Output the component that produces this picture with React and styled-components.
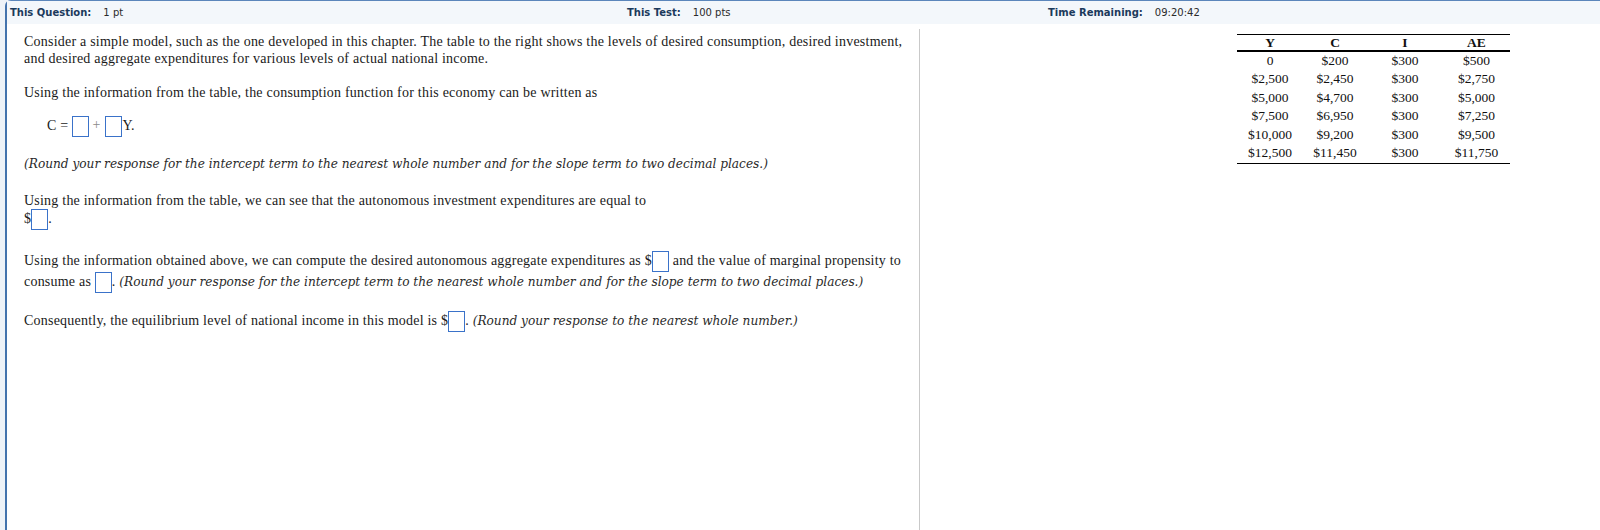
import React from "react";
import styled, { createGlobalStyle } from "styled-components";

const Global = createGlobalStyle`
  html, body { margin: 0; padding: 0; background: #eef3f8; }
  body { font-family: "Liberation Serif", "Times New Roman", serif; }
`;

const Frame = styled.div`
  margin-left: 5px;
  min-height: 529px;
  background: #fff;
  border-top: 1px solid #5b86bb;
  border-left: 2px solid #4373ad;
  border-top-left-radius: 6px;
  display: flex;
  flex-direction: column;
`;

const Header = styled.div`
  height: 22.5px;
  background: #f3f7fb;
  display: grid;
  grid-template-columns: 617px 421px 1fr;
  align-items: center;
  padding-left: 3px;
  font-family: "DejaVu Sans", Verdana, sans-serif;
  font-size: 10px;
`;

const HeadCell = styled.div`
  display: flex;
  gap: 12px;
`;

const HeadLabel = styled.span`
  font-weight: bold;
  color: #1b3a5c;
`;

const HeadValue = styled.span`
  color: #2a2a2a;
`;

const Body = styled.div`
  flex: 1;
  display: flex;
`;

const LeftPane = styled.div`
  width: 913px;
  box-sizing: border-box;
  margin-top: 5px;
  padding: 4px 0 0 17px;
  border-right: 1px solid #c9c9c9;
  font-size: 14px;
  letter-spacing: 0.22px;
  line-height: 17px;
  color: #1a1a1a;
`;

const RightPane = styled.div`
  flex: 1;
  padding: 10px 0 0 317px;
`;

const Para = styled.p`
  margin: 0 0 ${(p) => p.$gap ?? 16}px 0;
  ${(p) => p.$indent && `padding-left: ${p.$indent}px;`}
`;

const Hint = styled.span`
  font-family: "DejaVu Serif", Georgia, serif;
  font-style: italic;
  font-size: 12.15px;
  letter-spacing: 0;
  color: #2a2a2a;
`;

const Box = styled.span`
  display: inline-block;
  width: 15px;
  height: 19px;
  border: 1px solid #3a72c9;
  vertical-align: middle;
  margin: 0 ${(p) => p.$mr ?? 0}px 0 ${(p) => p.$ml ?? 0}px;
  box-sizing: content-box;
`;

const Plus = styled.span`
  color: #8a8a8a;
  margin: 0 4px 0 3px;
`;

const Table = styled.table`
  border-collapse: collapse;
  font-family: "Liberation Serif", "Times New Roman", serif;
  font-size: 13.5px;
  color: #111;
  border-top: 1px solid #000;
  border-bottom: 1px solid #000;
`;

const Th = styled.th`
  font-weight: bold;
  text-align: center;
  height: 15px;
  padding: 0;
  line-height: 15px;
  border-bottom: 2px solid #000;
  width: ${(p) => p.$w}px;
`;

const Td = styled.td`
  text-align: center;
  height: 18.5px;
  padding: 0;
  line-height: 18.5px;
`;

const rows = [
  ["0", "$200", "$300", "$500"],
  ["$2,500", "$2,450", "$300", "$2,750"],
  ["$5,000", "$4,700", "$300", "$5,000"],
  ["$7,500", "$6,950", "$300", "$7,250"],
  ["$10,000", "$9,200", "$300", "$9,500"],
  ["$12,500", "$11,450", "$300", "$11,750"],
];

export default function App() {
  return (
    <>
      <Global />
      <Frame>
        <Header>
          <HeadCell>
            <HeadLabel>This Question:</HeadLabel>
            <HeadValue>1 pt</HeadValue>
          </HeadCell>
          <HeadCell>
            <HeadLabel>This Test:</HeadLabel>
            <HeadValue>100 pts</HeadValue>
          </HeadCell>
          <HeadCell>
            <HeadLabel>Time Remaining:</HeadLabel>
            <HeadValue>09:20:42</HeadValue>
          </HeadCell>
        </Header>
        <Body>
          <LeftPane>
            <Para $gap={17}>
              Consider a simple model, such as the one developed in this chapter. The table to the right shows the levels of desired consumption, desired investment, and desired aggregate expenditures for various levels of actual national income.
            </Para>
            <Para $gap={15}>
              Using the information from the table, the consumption function for this economy can be written as
            </Para>
            <Para $indent={23} $gap={18}>
              C =<Box $ml={4} /><Plus>+</Plus><Box $mr={1} />Y.
            </Para>
            <Para $gap={19}>
              <Hint>(Round your response for the intercept term to the nearest whole number and for the slope term to two decimal places.)</Hint>
            </Para>
            <Para $gap={21}>
              Using the information from the table, we can see that the autonomous investment expenditures are equal to
              <br />
              $<Box />.
            </Para>
            <Para $gap={18}>
              Using the information obtained above, we can compute the desired autonomous aggregate expenditures as $<Box /> and the value of marginal propensity to consume as <Box />. <Hint>(Round your response for the intercept term to the nearest whole number and for the slope term to two decimal places.)</Hint>
            </Para>
            <Para>
              Consequently, the equilibrium level of national income in this model is $<Box />. <Hint>(Round your response to the nearest whole number.)</Hint>
            </Para>
          </LeftPane>
          <RightPane>
            <Table>
              <thead>
                <tr>
                  <Th $w={66}>Y</Th>
                  <Th $w={64}>C</Th>
                  <Th $w={76}>I</Th>
                  <Th $w={67}>AE</Th>
                </tr>
              </thead>
              <tbody>
                {rows.map((r, i) => (
                  <tr key={i}>
                    {r.map((c, j) => (
                      <Td key={j}>{c}</Td>
                    ))}
                  </tr>
                ))}
              </tbody>
            </Table>
          </RightPane>
        </Body>
      </Frame>
    </>
  );
}
